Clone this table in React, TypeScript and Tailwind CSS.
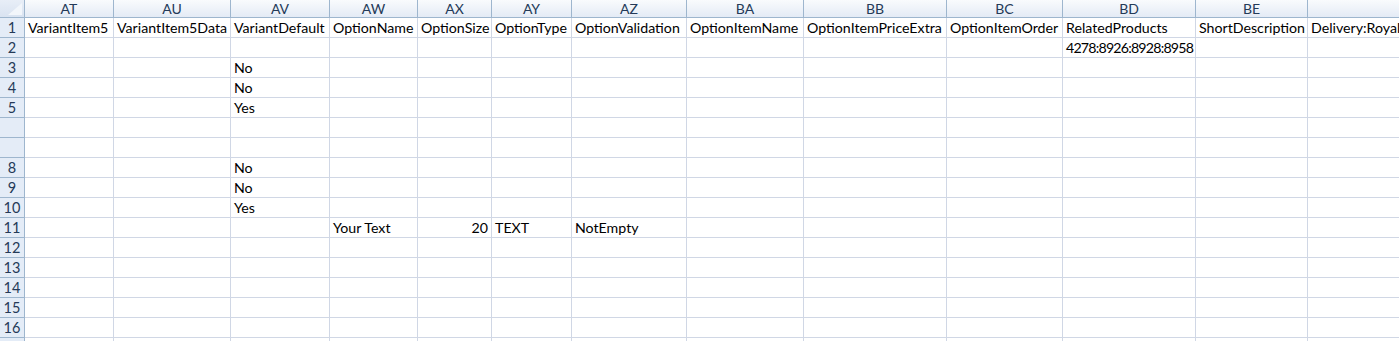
import React from 'react';

const columns = [
  { id: 'AT', width: 89 },
  { id: 'AU', width: 117 },
  { id: 'AV', width: 99 },
  { id: 'AW', width: 88 },
  { id: 'AX', width: 74 },
  { id: 'AY', width: 80 },
  { id: 'AZ', width: 115 },
  { id: 'BA', width: 117 },
  { id: 'BB', width: 143 },
  { id: 'BC', width: 116 },
  { id: 'BD', width: 133 },
  { id: 'BE', width: 112 },
  { id: 'BF', width: 260 },
];

type Cell = { text: string; right?: boolean; tight?: boolean };

// sheet data keyed by row number, then column letter
const data: Record<number, Record<string, Cell>> = {
  1: {
    AT: { text: 'VariantItem5' },
    AU: { text: 'VariantItem5Data' },
    AV: { text: 'VariantDefault' },
    AW: { text: 'OptionName' },
    AX: { text: 'OptionSize' },
    AY: { text: 'OptionType' },
    AZ: { text: 'OptionValidation' },
    BA: { text: 'OptionItemName' },
    BB: { text: 'OptionItemPriceExtra' },
    BC: { text: 'OptionItemOrder' },
    BD: { text: 'RelatedProducts' },
    BE: { text: 'ShortDescription' },
    BF: { text: 'Delivery:Royal' },
  },
  2: { BD: { text: '4278:8926:8928:8958', tight: true } },
  3: { AV: { text: 'No' } },
  4: { AV: { text: 'No' } },
  5: { AV: { text: 'Yes' } },
  8: { AV: { text: 'No' } },
  9: { AV: { text: 'No' } },
  10: { AV: { text: 'Yes' } },
  11: {
    AW: { text: 'Your Text' },
    AX: { text: '20', right: true },
    AY: { text: 'TEXT' },
    AZ: { text: 'NotEmpty' },
  },
};

const rows = Array.from({ length: 17 }, (_, i) => i + 1);
// rows whose number isn't drawn in the row header
const hiddenLabels = [6, 7, 17];

export default function App() {
  return (
    <div
      className="h-[341px] w-[1399px] overflow-hidden bg-white"
      style={{ fontFamily: 'Lato, "Liberation Sans", sans-serif' }}
    >
      <div className="grid w-max grid-cols-[25px_89px_117px_99px_88px_74px_80px_115px_117px_143px_116px_133px_112px_260px]">
        {/* Corner */}
        <div className="relative box-border h-[18px] border-r border-b border-[#9eb6ce] bg-gradient-to-b from-[#e8eef7] to-[#d9e3f1]">
          <svg className="absolute right-[2px] bottom-[2px]" width="14" height="12" viewBox="0 0 14 12">
            <polygon points="14,0 14,12 0,12" fill="#f2f6fb" />
          </svg>
        </div>
        {/* Column headers */}
        {columns.map(col => (
          <div
            key={col.id}
            className="box-border flex h-[18px] items-center justify-center border-r border-b border-[#9eb6ce] bg-gradient-to-b from-[#f9fbfd] to-[#e4ebf5] pt-[1px] text-[14px] leading-none text-[#243a58]"
          >
            {col.id}
          </div>
        ))}

        {rows.map(r => (
          <React.Fragment key={r}>
            <div className="box-border flex h-[20px] items-center justify-center border-r border-b border-[#9eb6ce] bg-[#e4ecf7] pt-[1px] text-[14.5px] leading-none text-[#243a58]">
              {hiddenLabels.includes(r) ? '' : r}
            </div>
            {columns.map(col => {
              const cell = data[r]?.[col.id];
              return (
                <div
                  key={col.id}
                  className={`box-border flex h-[20px] items-center overflow-visible whitespace-nowrap border-r border-b border-[#d0d7e5] px-[3px] pt-[2px] text-[14.2px] leading-none text-black ${
                    cell?.right ? 'justify-end' : 'justify-start'
                  } ${cell?.tight ? 'tracking-[-0.8px]' : ''}`}
                >
                  {cell?.text}
                </div>
              );
            })}
          </React.Fragment>
        ))}
      </div>
    </div>
  );
}
